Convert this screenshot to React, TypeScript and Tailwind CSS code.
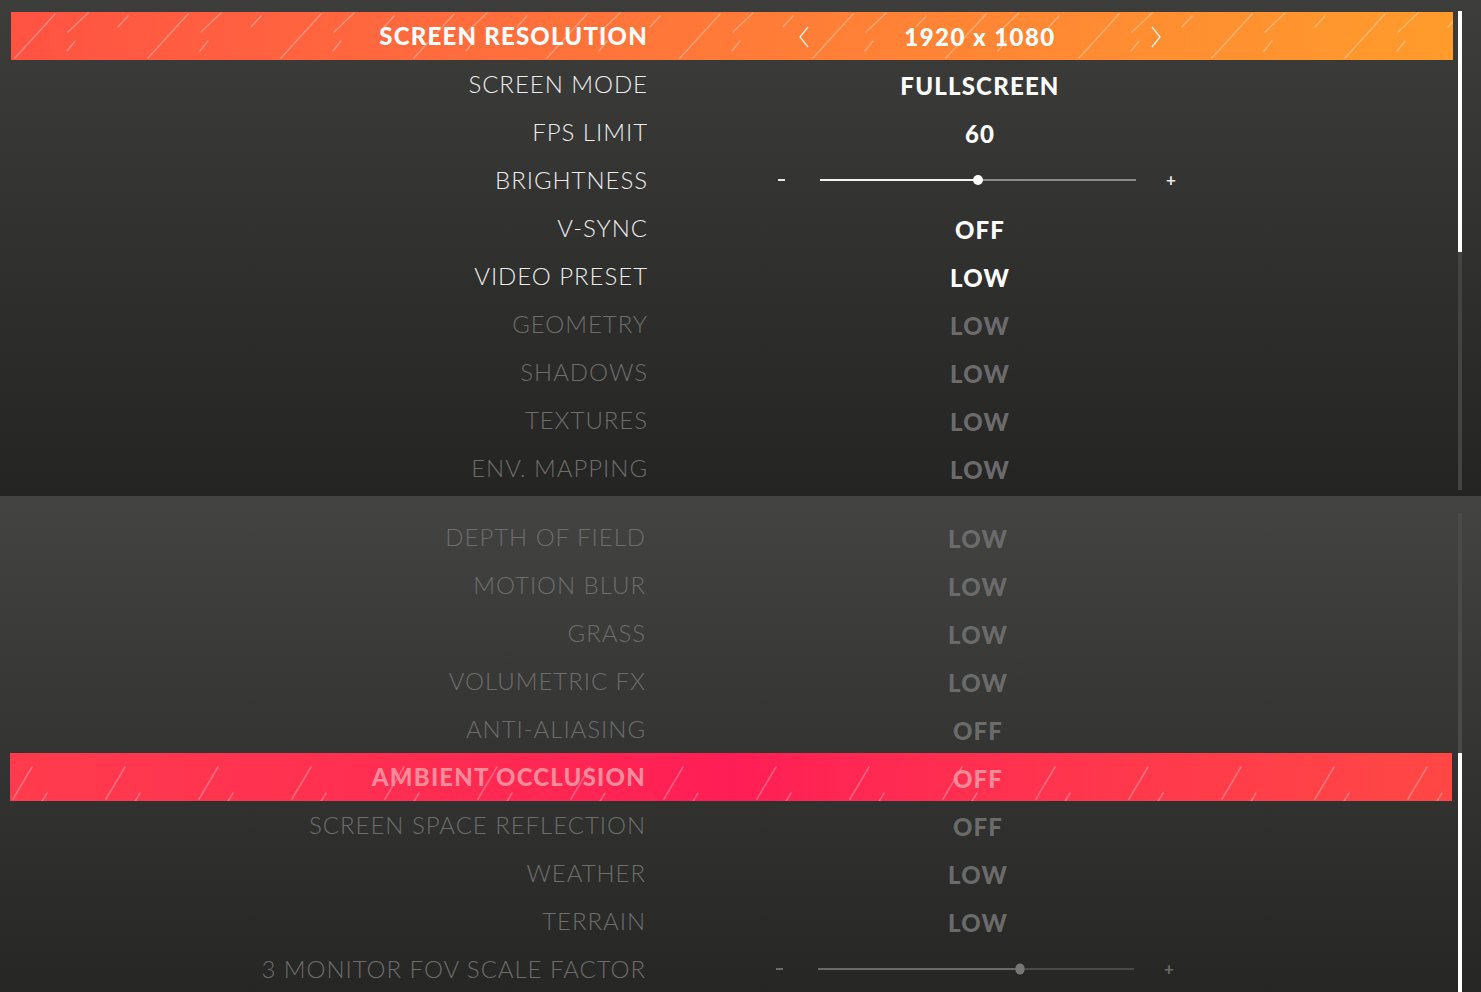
import React from "react";

type Row = {
  label: string;
  value?: string;
  slider?: number;
  disabled?: boolean;
  hl?: "orange" | "pink";
  arrows?: boolean;
};

const top: Row[] = [
  { label: "SCREEN RESOLUTION", value: "1920 x 1080", hl: "orange", arrows: true },
  { label: "SCREEN MODE", value: "FULLSCREEN" },
  { label: "FPS LIMIT", value: "60" },
  { label: "BRIGHTNESS", slider: 0.5 },
  { label: "V-SYNC", value: "OFF" },
  { label: "VIDEO PRESET", value: "LOW" },
  { label: "GEOMETRY", value: "LOW", disabled: true },
  { label: "SHADOWS", value: "LOW", disabled: true },
  { label: "TEXTURES", value: "LOW", disabled: true },
  { label: "ENV. MAPPING", value: "LOW", disabled: true },
];

const bottom: Row[] = [
  { label: "DEPTH OF FIELD", value: "LOW", disabled: true },
  { label: "MOTION BLUR", value: "LOW", disabled: true },
  { label: "GRASS", value: "LOW", disabled: true },
  { label: "VOLUMETRIC FX", value: "LOW", disabled: true },
  { label: "ANTI-ALIASING", value: "OFF", disabled: true },
  { label: "AMBIENT OCCLUSION", value: "OFF", disabled: true, hl: "pink" },
  { label: "SCREEN SPACE REFLECTION", value: "OFF", disabled: true },
  { label: "WEATHER", value: "LOW", disabled: true },
  { label: "TERRAIN", value: "LOW", disabled: true },
  { label: "3 MONITOR FOV SCALE FACTOR", slider: 0.64, disabled: true },
];

const labelFont = { fontFamily: "Lato, 'Noto Sans', sans-serif" };

function Stripes({ kind }: { kind: "orange" | "pink" }) {
  const id = kind === "orange" ? "stripeO" : "stripeP";
  return (
    <svg className="absolute inset-0 h-full w-full pointer-events-none" preserveAspectRatio="none">
      <defs>
        {kind === "orange" ? (
          <pattern id={id} width="133" height="48" patternUnits="userSpaceOnUse">
            <g stroke="rgba(255,255,255,0.28)" strokeWidth="1.6" strokeLinecap="round" fill="none">
              <line x1="4" y1="46" x2="44" y2="2" />
              <line x1="57" y1="20" x2="77" y2="1" />
              <line x1="56" y1="39" x2="64" y2="29" />
              <line x1="107" y1="15" x2="117" y2="4" />
            </g>
          </pattern>
        ) : (
          <pattern id={id} width="93" height="48" patternUnits="userSpaceOnUse">
            <g stroke="rgba(255,255,255,0.26)" strokeWidth="1.6" strokeLinecap="round" fill="none">
              <line x1="3" y1="46" x2="22" y2="14" />
              <line x1="31" y1="50" x2="37" y2="40" />
            </g>
          </pattern>
        )}
      </defs>
      <rect width="100%" height="100%" fill={`url(#${id})`} />
    </svg>
  );
}

function Slider({ pos, disabled }: { pos: number; disabled?: boolean }) {
  const fill = disabled ? "bg-[#6a6a6a]" : "bg-[#f2f2f2]";
  const rest = disabled ? "bg-[#4a4a4a]" : "bg-[#8a8a8a]";
  const sign = disabled ? "text-[#6a6a6a]" : "text-[#e8e8e8]";
  const dash = disabled ? "bg-[#6a6a6a]" : "bg-[#e8e8e8]";
  return (
    <div className="flex items-center w-[410px] h-full">
      <div className="w-[20px] flex justify-center">
        <div className={`w-[7px] h-[2px] ${dash}`} />
      </div>
      <div className="relative flex items-center w-[316px] ml-[29px] h-[10px]">
        <div className={`h-[2px] ${fill}`} style={{ width: `${pos * 100}%` }} />
        <div className={`h-[2px] flex-1 ${rest}`} />
        <div
          className={`absolute top-1/2 -translate-y-1/2 -translate-x-1/2 rounded-full ${
            disabled ? "w-[9px] h-[11px] bg-[#777]" : "w-[10px] h-[10px] bg-white"
          }`}
          style={{ left: `${pos * 100}%` }}
        />
      </div>
      <span className={`w-[20px] ml-[25px] text-center text-[17px] font-bold ${sign}`} style={labelFont}>+</span>
    </div>
  );
}

function Chevron({ dir }: { dir: "l" | "r" }) {
  return (
    <svg width="12" height="22" viewBox="0 0 12 22" fill="none">
      <path
        d={dir === "l" ? "M10 1 L2 11 L10 21" : "M2 1 L10 11 L2 21"}
        stroke="rgba(255,255,255,0.85)"
        strokeWidth="1.4"
      />
    </svg>
  );
}

function RowView({ r, labelW }: { r: Row; labelW: string }) {
  const bg =
    r.hl === "orange"
      ? "bg-gradient-to-r from-[#ff5243] via-[#ff7a38] to-[#ff9b2b]"
      : r.hl === "pink"
      ? "bg-gradient-to-r from-[#ff3b4d] via-[#ff1d55] to-[#ff4744]"
      : "";
  const labelColor = r.hl
    ? r.disabled
      ? "text-[#ff8a99]"
      : "text-white"
    : r.disabled
    ? "text-[#6d6d6d]"
    : "text-[#ececec]";
  const valueColor = r.hl
    ? r.disabled
      ? "text-[#ff8a99]"
      : "text-white"
    : r.disabled
    ? "text-[#6b6b6b]"
    : "text-white";
  return (
    <div className={`relative h-[48px] flex items-center ${bg}`}>
      {r.hl && <Stripes kind={r.hl} />}
      <div
        className={`relative shrink-0 ${labelW} text-right text-[24px] ${
          r.hl ? "font-black tracking-[0.05em]" : "font-light tracking-[0.04em]"
        } ${labelColor}`}
        style={labelFont}
      >
        {r.label}
      </div>
      <div className="relative flex items-center w-[664px] shrink-0 h-full">
        {r.slider !== undefined ? (
          <div className="pl-[123px] h-full">
            <Slider pos={r.slider} disabled={r.disabled} />
          </div>
        ) : r.arrows ? (
          <div className="flex items-center justify-between w-[364px] mx-auto pt-[2px]">
            <Chevron dir="l" />
            <span className={`text-[24px] font-black tracking-[0.06em] ${valueColor}`} style={labelFont}>
              {r.value}
            </span>
            <Chevron dir="r" />
          </div>
        ) : (
          <span
            className={`mx-auto pt-[4px] text-[24px] font-black tracking-[0.05em] ${valueColor}`}
            style={labelFont}
          >
            {r.value}
          </span>
        )}
      </div>
    </div>
  );
}

function Panel({
  rows,
  pad,
  bg,
  bar,
  labelW,
}: {
  rows: Row[];
  pad: string;
  bg: string;
  bar: React.ReactNode;
  labelW: string;
}) {
  return (
    <div className={`relative h-[496px] overflow-hidden ${bg}`}>
      <div className={`flex ${pad}`}>
        <div className="w-[1442px] flex flex-col">
          {rows.map((r) => (
            <RowView key={r.label} r={r} labelW={labelW} />
          ))}
        </div>
        <div className="ml-[5px]">{bar}</div>
      </div>
    </div>
  );
}

export default function App() {
  return (
    <div className="w-[1481px] h-[992px] overflow-hidden bg-[#2a2a2a]">
      <Panel
        rows={top}
        labelW="w-[637px]"
        pad="pt-[12px] pl-[11px]"
        bg="bg-gradient-to-b from-[#3d3d3c] to-[#242423]"
        bar={
          <div className="flex flex-col w-[4px] -mt-[1px]">
            <div className="h-[241px] bg-white" />
            <div className="h-[238px] bg-[#444443]" />
          </div>
        }
      />
      <Panel
        rows={bottom}
        labelW="w-[636px]"
        pad="pt-[17px] pl-[10px]"
        bg="bg-gradient-to-b from-[#434342] to-[#262625]"
        bar={
          <div className="flex flex-col w-[4px] ml-[1px]">
            <div className="h-[240px] bg-[#4a4a49]" />
            <div className="h-[240px] bg-white" />
          </div>
        }
      />
    </div>
  );
}
